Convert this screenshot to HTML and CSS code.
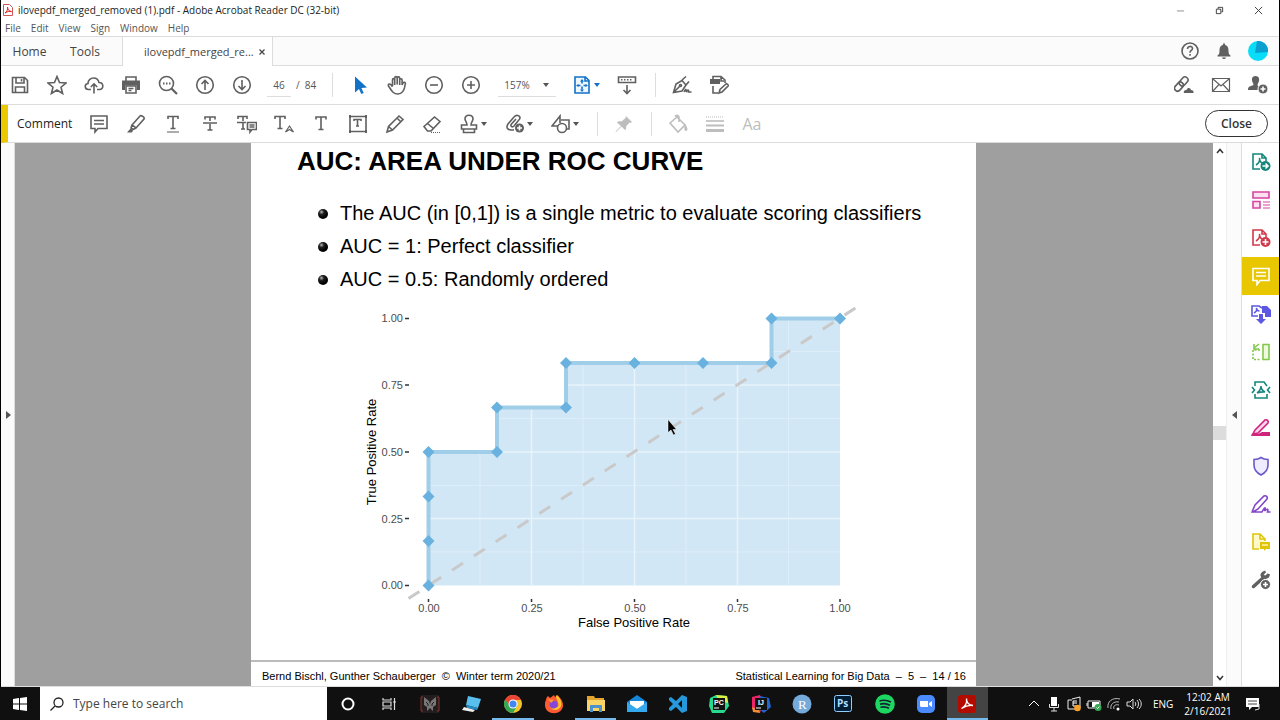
FILE: index.html
```html
<!DOCTYPE html>
<html lang="en">
<head>
<meta charset="utf-8">
<title>ilovepdf_merged_removed (1).pdf - Adobe Acrobat Reader DC (32-bit)</title>
<link rel="stylesheet" href="styles.css">
</head>
<body>
<div class="app">
  <header class="titlebar">
    <svg class="app-icon" viewBox="0 0 10 12"><path d="M.5.5h6l3 3v8h-9z" fill="#fff" stroke="#c55"/><path d="M2 9c2-1 3-4 2.500-6 0 3 2 4.500 4 4.500-2-.5-4 0-6.500 1.500" fill="none" stroke="#d22"/></svg>
    <span class="window-title">ilovepdf_merged_removed (1).pdf - Adobe Acrobat Reader DC (32-bit)</span>
    <div class="window-controls">
      <button aria-label="Minimize"><svg viewBox="0 0 10 10"><path d="M1 5.500h8" stroke="#888"/></svg></button>
      <button aria-label="Restore"><svg viewBox="0 0 10 10"><path d="M1.500 3.500h5v5h-5zM3.500 3V1.500h5v5H7" fill="none" stroke="#333"/></svg></button>
      <button aria-label="Close window"><svg viewBox="0 0 10 10"><path d="M1 1l8 8M9 1L1 9" stroke="#333"/></svg></button>
    </div>
  </header>
  <nav class="menubar" aria-label="Menu">
    <button>File</button><button>Edit</button><button>View</button><button>Sign</button><button>Window</button><button>Help</button>
  </nav>
  <div class="tabbar">
    <button class="tab home">Home</button>
    <button class="tab tools">Tools</button>
    <div class="tab document"><span>ilovepdf_merged_re...</span><button class="tab-close" aria-label="Close tab"><svg viewBox="0 0 8 8"><path d="M1.500 1.500l5 5M6.500 1.500l-5 5" stroke="#444" stroke-width="1.200"/></svg></button></div>
    <div class="actions">
      <button class="tool" aria-label="Help"><svg viewBox="0 0 20 20"><circle cx="10" cy="10" r="8"/><path d="M7.500 8c0-3.500 5-3.200 5-.5 0 2-2.500 2-2.500 4.200M10 13v1.800" stroke-width="1.600"/></svg></button>
      <button class="tool" aria-label="Notifications"><svg viewBox="0 0 20 20"><path class="fill" d="M9 2.500h2V4c3 .8 3.500 3 3.500 6 0 2.500.5 3.500 2 4.500v1h-13v-1c1.500-1 2-2 2-4.500 0-3 .5-5.200 3.500-6zM8 16.500h4c-.5 2-3.500 2-4 0z"/></svg></button>
      <button class="tool" aria-label="Account"><svg viewBox="0 0 20 20"><circle cx="10" cy="10" r="10" fill="#08dcf8" stroke="none"/><path d="M9 0a10 10 0 0 1 11 11L7 12z" fill="#0b9fd0" stroke="none"/></svg></button>
    </div>
  </div>

  <div class="toolbar main-tools">
    <div class="group">
      <button class="tool" aria-label="Save"><svg viewBox="0 0 20 20"><path d="M2.500 2.500h12l3 3v12h-15zM6 3v5h8V3M5.500 17v-5h9v5M11.500 4v2.500"/></svg></button>
      <button class="tool" aria-label="Star"><svg viewBox="0 0 20 20"><path d="M10 1.500l2.500 6 6.500.5-5 4.200 1.600 6.300L10 15l-5.600 3.500L6 12.200 1 8l6.500-.5z"/></svg></button>
      <button class="tool" aria-label="Upload"><svg viewBox="0 0 20 20"><path d="M7 14.500H4.500C.500 14.500 0 9 4 8.500 4 5 7 3 9.500 3c3 0 5 2 5.500 4.500 5 0 5 7 .5 7H13M10 18.500V9M6.800 12L10 8.800l3.200 3.200"/></svg></button>
      <button class="tool" aria-label="Print"><svg viewBox="0 0 20 20"><path d="M5 6V2h10v4"/><path class="fill" d="M1 5.500h18V15h-3v-4.500H4V15H1z"/><path d="M5 11h10v7H5zM7.500 13.500h5M7.500 15.500h3"/></svg></button>
      <button class="tool" aria-label="Find"><svg viewBox="0 0 20 20"><circle cx="8.500" cy="8.500" r="7"/><path d="M13.500 13.500L19 19" stroke-width="2.200"/><path d="M5 8.500h1.500M8 8.500h1.500M11 8.500h1.500" stroke-width="1.800"/></svg></button>
      <button class="tool" aria-label="Previous page"><svg viewBox="0 0 20 20"><circle cx="10" cy="10" r="8.300"/><path d="M10 15V5.500M6.500 9L10 5.500 13.500 9"/></svg></button>
      <button class="tool" aria-label="Next page"><svg viewBox="0 0 20 20"><circle cx="10" cy="10" r="8.300"/><path d="M10 5v9.500M6.500 11l3.500 3.500 3.500-3.500"/></svg></button>
    </div>
    <div class="pager"><input aria-label="Page number" value="46"><span>/&nbsp; 84</span></div>
    <div class="group ruled selection">
      <button class="tool" aria-label="Select"><svg viewBox="0 0 20 20"><path d="M5 1.500v16l4-3.500 2.300 5 2.400-1-2.300-5 5.600-.4z" fill="#1272c8" stroke="none"/></svg></button>
      <button class="tool" aria-label="Hand"><svg viewBox="0 0 20 20"><path d="M5.500 11V5c0-1.800 2-1.800 2.200 0V10 3c.2-1.800 2.500-1.800 2.500 0v6.500V3c.3-1.600 2.400-1.500 2.500 0v7-5.200c.3-1.500 2.400-1.300 2.400.2V10l.8-1.800c1-1.700 2.800-1 2.400.8-.6 5-3 10-7.500 10C6 19 4.500 15.500 1.500 11c-.8-2 1.300-2.700 2.500-1.200l1.500 2"/></svg></button>
      <button class="tool" aria-label="Zoom out"><svg viewBox="0 0 20 20"><circle cx="10" cy="10" r="8.300"/><path d="M6 10h8"/></svg></button>
      <button class="tool" aria-label="Zoom in"><svg viewBox="0 0 20 20"><circle cx="10" cy="10" r="8.300"/><path d="M6 10h8M10 6v8"/></svg></button>
    </div>
    <button class="zoom-level">157%<i class="caret"></i></button>
    <div class="group fit">
      <button class="tool drop blue" aria-label="Fit page"><svg viewBox="0 0 20 20"><path d="M3 2h10.500L17 5.500V18H3z" fill="#eef7fe"/><path d="M13 2v4h4M10 5.500v3M10 11.500v3M5.500 10.500h3M11.500 10.500h3"/><path d="M10 4l2 2.500H8zM10 17l2-2.500H8zM4 10.500L6.500 9v3zM16 10.500L13.500 9v3z" fill="#1272c8" stroke="none"/></svg><i class="caret"></i></button>
      <button class="tool" aria-label="Scrolling"><svg viewBox="0 0 20 20"><path d="M1.500 2h17v5.500h-17zM10 10v8M6.500 15l3.500 3.500 3.500-3.500"/><path d="M4 4.800h12" stroke-dasharray="1.500 1.500"/></svg></button>
    </div>
    <div class="group ruled sign">
      <button class="tool" aria-label="Sign"><svg viewBox="0 0 20 20"><path d="M1.500 17.500L4 9l6-3.500 4 4.500-4 6zM2 17l6-6M10 5l4-3.500M14 10l3-3.500"/><circle cx="8.500" cy="10.500" r="1"/><path d="M12 17c2-4 2.500-3 2 0 2-3 3-2 2.500 0h3"/></svg></button>
      <button class="tool" aria-label="Fill and sign"><svg viewBox="0 0 20 20"><path class="fill" d="M1 4h10v5H1z"/><path d="M4 4V1.500h8L16 5v3M12 2v4h3M4 11v7h5M10 18l1-3.500 6.500-6 2 2-6.500 6.500z"/></svg></button>
    </div>
    <div class="actions">
      <button class="tool" aria-label="Share link"><svg viewBox="0 0 20 20"><g transform="rotate(-48 8 9)"><rect x="-1" y="5.500" width="10" height="6" rx="3"/><rect x="6" y="5.500" width="10" height="6" rx="3"/></g><path class="fill" d="M10 18c-1-3 2-3 2.500-3 1-3 4-2.500 4.500 0 2 0 3 1.500 2.500 3z"/></svg></button>
      <button class="tool" aria-label="Email"><svg viewBox="0 0 20 20"><path d="M1.500 3.500h17v13h-17zM2 4l8 7 8-7M2 16l6-6.500M18 16l-6-6.500" stroke-width="1.200"/></svg></button>
      <button class="tool" aria-label="Add person"><svg viewBox="0 0 20 20"><path class="fill" d="M7.500 1c3.500 0 4 3 3.500 5s-1.500 3-1.500 4c0 1.500 3 1.500 4 2.500V15H0c0-3 1-3.500 4.500-4.500 2-.6.500-2-.2-4C3.500 4 4 1 7.500 1z"/><circle cx="15" cy="14" r="5" fill="#606060" stroke="#fff" stroke-width="1"/><path d="M12.500 14h5M15 11.500v5" stroke="#fff"/></svg></button>
    </div>
  </div>

  <div class="toolbar comment-tools">
    <span class="comment-label">Comment</span>
    <div class="group annotate">
      <button class="tool" aria-label="Sticky note"><svg viewBox="0 0 20 20"><path d="M2 2h16v12.500H9L6 18v-3.500H2zM5 6.500h10M5 10h10"/></svg></button>
      <button class="tool" aria-label="Highlight"><svg viewBox="0 0 20 20"><path d="M6 11l8-9c1-1 5 1 4 3l-8 9zM6 11l-1 3 2 1.500 3-1.500"/><path class="fill" d="M4.500 14.500L1 18.500h5l1-2z"/></svg></button>
      <button class="tool" aria-label="Underline"><svg viewBox="0 0 20 20"><path d="M5 5V2.500h10V5M10 2.500v12M7.500 14.500h5"/><path d="M4 18h12" stroke="#999"/></svg></button>
      <button class="tool" aria-label="Strikethrough"><svg viewBox="0 0 20 20"><path d="M5 5.500V3h10v2.500M10 3v4M10 10v6M7.500 16h5M3 9h14"/></svg></button>
      <button class="tool" aria-label="Replace text"><svg viewBox="0 0 20 20"><path d="M1 5V2.500h9V5M6 2.500V7M6 9v6M4 15h4M0 8.500h9M10.500 8.500h9v7H15l-2 2.500v-2.500h-2.500zM12.500 11h5M12.500 13h5"/></svg></button>
      <button class="tool" aria-label="Insert text"><svg viewBox="0 0 20 20"><path d="M1 5V2.500h10V5M6 2.500v12M3.500 14.500h5"/><path d="M11.500 18l4-6 4 6-4-2.500z" stroke-width="1.200"/></svg></button>
      <button class="tool" aria-label="Add text"><svg viewBox="0 0 20 20"><path d="M5 5.500V3h10v2.500M10 3v12.500M7.500 15.500h5"/></svg></button>
      <button class="tool" aria-label="Text box"><svg viewBox="0 0 20 20"><path d="M2 2.500h16v15H2zM6 7V5.500h7V7M9.500 5.500V12M8 12h3"/><path d="M1 2.500h2M17 2.500h2M1 17.500h2M17 17.500h2" stroke-width="3"/></svg></button>
      <button class="tool" aria-label="Pencil"><svg viewBox="0 0 20 20"><path d="M2 18l1.500-5.500L14 2l4 3.500L7.500 16zM3.500 12.500l4 3.500M12 4l4 4"/></svg></button>
      <button class="tool" aria-label="Eraser"><svg viewBox="0 0 20 20"><path d="M2 12.500L12.500 3l5.500 4.500L9 17H5.500zM5.500 9.500l6 5"/><path d="M9 18.500h10" stroke-dasharray="1 1" stroke-width="1"/></svg></button>
      <button class="tool drop stamp" aria-label="Stamp"><svg viewBox="0 0 20 20"><path d="M8 11c0-3-2-4-2-6 0-5 8-5 8 0 0 2-2 3-2 6h5.500v4h-15v-4zM4.500 15v3.500h11V15"/></svg><i class="caret"></i></button>
      <button class="tool drop" aria-label="Attach"><svg viewBox="0 0 20 20"><path d="M9 16H6c-4 0-5-3-3-6l6-7c2-2.500 6-2 6 1 0 1-1 2-2 3l-4 5c-2 2-4 0-2.500-2L11 5"/><circle class="fill" cx="14.500" cy="14" r="4.500"/><path d="M12 14h5M14.500 11.500v5" stroke="#fff"/></svg><i class="caret"></i></button>
      <button class="tool drop" aria-label="Shapes"><svg viewBox="0 0 20 20"><path d="M7 12H1L9 2v7M10 6h8v9h-3"/><circle cx="11" cy="14" r="4.500"/></svg><i class="caret"></i></button>
    </div>
    <div class="group ruled pin"><button class="tool faint" aria-label="Pin"><svg viewBox="0 0 20 20"><path class="fill" d="M12 2l6 6-1.500 1-1-.5-3.500 4c.5 2 0 3-1 3.500l-3.500-3.500L2 18l-.5-.5L7 12 3 8.500C4 7 6 7 7.500 7.500l4-3.500z"/></svg></button></div>
    <div class="group ruled style">
      <button class="tool faint" aria-label="Fill color"><svg viewBox="0 0 20 20"><path d="M2 9l7-6 8 8-7 7zM7 2.500c2-2 4-1 4 1V8"/><path class="fill" d="M17 10c3 4 3 7 1 7s-2-3-1-7z"/></svg></button>
      <button class="tool faint" aria-label="Line width"><svg viewBox="0 0 20 20"><path d="M1 3h18" stroke-width="1" stroke-dasharray="1 1"/><path d="M1 7h18"/><path d="M1 11.500h18" stroke-width="2"/><path d="M1 16.500h18" stroke-width="3"/></svg></button>
      <button class="tool faint aa">Aa</button>
    </div>
    <button class="close-button">Close</button>
  </div>

  <main class="workspace">
    <button class="left-rail" aria-label="Show navigation"><svg viewBox="0 0 6 8"><path d="M1 0l5 4-5 4z" fill="#555"/></svg></button>
    <div class="viewer">
      <article class="slide">
        <h1>AUC: AREA UNDER ROC CURVE</h1>
        <ul>
          <li>The AUC (in [0,1]) is a single metric to evaluate scoring classifiers</li>
          <li>AUC = 1: Perfect classifier</li>
          <li>AUC = 0.5: Randomly ordered</li>
        </ul>
        <svg class="chart" viewBox="360 300 500 335" role="img" aria-label="ROC curve">
          <path d="M428.500 585.500V452H497V407.500H566V363H771.500V318.500H840V585.500z" fill="#d2e7f5"/>
          <g stroke="#e7f4fc" stroke-width="1">
            <path d="M480 452v133M583 363v222M686 363v222M788.500 319v266M429 552h411M429 485.500h411M497 418.500h343M772 351.500h68" opacity=".6"/>
            <path d="M531.500 408v177M634.500 363v222M737.500 363v222M429 518.500h411M429 452h411M566 385h274" stroke-width="1.500"/>
          </g>
          <path d="M428.500 585.500V452H497V407.500H566V363H771.500V318.500H840" fill="none" stroke="#a0cee8" stroke-width="4"/>
          <path d="M408.500 598.500L857 307" fill="none" stroke="#c9c9c9" stroke-width="3" stroke-dasharray="13 13"/>
          <g fill="#69b1df">
            <path id="pt" d="M428.500 579.500l6 6-6 6-6-6z"/>
            <use href="#pt" y="-44.500"/><use href="#pt" y="-89"/><use href="#pt" y="-133.500"/>
            <use href="#pt" x="68.500" y="-133.500"/><use href="#pt" x="68.500" y="-178"/><use href="#pt" x="137.500" y="-178"/><use href="#pt" x="137.500" y="-222.500"/>
            <use href="#pt" x="206" y="-222.500"/><use href="#pt" x="274.500" y="-222.500"/><use href="#pt" x="343" y="-222.500"/><use href="#pt" x="343" y="-267"/><use href="#pt" x="411.500" y="-267"/>
          </g>
          <path d="M405 318.500h4M405 385h4M405 452h4M405 518.500h4M405 585.500h4M428.500 599v3M531.500 599v3M634.500 599v3M737.500 599v3M840 599v3" stroke="#333" stroke-width="1.500"/>
          <g class="ticks" text-anchor="end"><text x="403" y="322">1.00</text><text x="403" y="389">0.75</text><text x="403" y="456">0.50</text><text x="403" y="523">0.25</text><text x="403" y="589">0.00</text></g>
          <g class="ticks" text-anchor="middle"><text x="429" y="612">0.00</text><text x="532" y="612">0.25</text><text x="635" y="612">0.50</text><text x="738" y="612">0.75</text><text x="840" y="612">1.00</text></g>
          <g class="axis-title" text-anchor="middle"><text x="634" y="627">False Positive Rate</text><text transform="translate(376 452) rotate(-90)">True Positive Rate</text></g>
          <path d="M668 419.500v13l3-2.500 2.500 5 2-1-2.500-4.500h3.500z" fill="#000" stroke="#fff" stroke-width=".5"/>
        </svg>
        <footer><span>Bernd Bischl, Gunther Schauberger &nbsp;© &nbsp;Winter term 2020/21</span><span>Statistical Learning for Big Data &nbsp;– &nbsp;5 &nbsp;– &nbsp;14 / 16</span></footer>
      </article>
    </div>
    <div class="scrollbar"><svg viewBox="0 0 8 6"><path d="M1 5l3-3.500L7 5" fill="none" stroke="#333" stroke-width="1.500"/></svg><div class="thumb"></div><svg viewBox="0 0 8 6"><path d="M1 1l3 3.500L7 1" fill="none" stroke="#333" stroke-width="1.500"/></svg></div>
    <button class="right-rail" aria-label="Hide tools"><svg viewBox="0 0 6 8"><path d="M6 0L1 4l5 4z" fill="#555"/></svg></button>
    <aside class="tool-pane" aria-label="Tools">
      <button class="tool teal" aria-label="Export PDF"><svg viewBox="0 0 20 20"><path d="M9 17H2V2h9l4 4v3M11 2v4h4M5 13c3-2 4-5 3.500-7 0 3 1 4.500 3 5"/><circle class="fill" cx="14.500" cy="14" r="5"/><path d="M11.500 14h5M14.500 11.500l2.500 2.500-2.500 2.500" stroke="#fff"/></svg></button>
      <button class="tool pink" aria-label="Organize pages"><svg viewBox="0 0 20 20"><path d="M2 2h16v6H2zM2 11.500h7v6.500H2z" fill="#fde0f0"/><path d="M12 12h7M12 15h7M12 18h7" stroke-width="1"/></svg></button>
      <button class="tool red" aria-label="Create PDF"><svg viewBox="0 0 20 20"><path d="M9 17H2V2h9l4 4v3M11 2v4h4M5 13c3-2 4-5 3.500-7 0 3 1 4.500 3 5"/><circle class="fill" cx="14.500" cy="14" r="5"/><path d="M11.500 14h6M14.500 11v6" stroke="#fff"/></svg></button>
      <button class="tool active" aria-label="Comment"><svg viewBox="0 0 20 20"><path d="M2 2.500h16v12H9l-3 4v-4H2zM5 6.500h10M5 10h10"/></svg></button>
      <button class="tool indigo" aria-label="Combine files"><svg viewBox="0 0 20 20"><path d="M7 12H1V2h7l3 2M3 9c2-1 3-3 2.500-5 0 2 1 3 3 3"/><path class="fill" d="M11 2h5l4 4v7h-6V9h-3zM8 10h4v5h3l-5 5-5-5h3z"/></svg></button>
      <button class="tool green" aria-label="Rotate pages"><svg viewBox="0 0 20 20"><path d="M12 2.500h6v15h-6z" fill="#edfadf"/><path d="M9 8H2v9.500h8" stroke-dasharray="2 1.500"/><path d="M3 2v5h5M3 6l5-4"/></svg></button>
      <button class="tool teal" aria-label="Compress"><svg viewBox="0 0 20 20"><path d="M4 6V2h9l3 4M4 14v4h12v-4M1 7l2.500 3L1 13M19 7l-2.500 3 2.500 3M6 13c3-2 4-4 4-7 0 3 2 5 4 6-3-.5-5 0-8 1"/></svg></button>
      <button class="tool magenta" aria-label="Redact"><svg viewBox="0 0 20 20"><path d="M4 12L14 2c2-1 4 1 3 3L7 15l-5 1z" fill="#fbd5e9"/><path class="fill" d="M1 15.500l6 .5 4-2h8v4H0z"/></svg></button>
      <button class="tool violet" aria-label="Protect"><svg viewBox="0 0 20 20"><path d="M10 1.500c2 1.500 4 2 7 2V9c0 5-3 8-7 10-4-2-7-5-7-10V3.500c3 0 5-.5 7-2z" fill="#eeedff"/></svg></button>
      <button class="tool purple" aria-label="Fill and sign"><svg viewBox="0 0 20 20"><path d="M1 18l3-7 9-9c2-1 4 1 3 3l-9 10-5 3h9c3-6 4-5 2.500-1 3-3 4-2 3 1h3"/></svg></button>
      <button class="tool yellow" aria-label="Send for comments"><svg viewBox="0 0 20 20"><path d="M8 17H2V2h7l5 5v2M9 2v5h5" fill="#fff9c9"/><path class="fill" d="M9 10h10v7h-4l-2 2v-2H9z"/><path d="M11 13h6" stroke="#fff3a0"/></svg></button>
      <button class="tool" aria-label="More tools"><svg viewBox="0 0 20 20"><path d="M2.500 16.500L12 8" stroke-width="3.500" stroke-linecap="round"/><path d="M17.500 4l-3.500 3-2.500-2.500L14.500 1.500M18 4c0 4-4 5-6.500 3S11 2 14.500 1.500" stroke-width="1.800"/><circle cx="14.500" cy="14.500" r="5" fill="#606060" stroke="#fff" stroke-width="1"/><path d="M12 14.500h5M14.500 12v5" stroke="#fff"/></svg></button>
    </aside>
  </main>
</div>

<div class="taskbar">
  <button class="start" aria-label="Start"><svg viewBox="0 0 14 14"><path d="M0 2l6-1v5.500H0zM7 .900L14 0v6.500H7zM0 7.500h6V13l-6-1zM7 7.500h7V14l-7-.9z" fill="#fff"/></svg></button>
  <label class="search"><svg viewBox="0 0 14 14"><circle cx="8.500" cy="5.500" r="4.500" fill="none" stroke="#222" stroke-width="1.300"/><path d="M5 9L.500 13.500" stroke="#222" stroke-width="1.300"/></svg><input type="text" aria-label="Search" placeholder="Type here to search"></label>
  <div class="pinned">
    <button aria-label="Cortana"><svg viewBox="0 0 20 20"><circle cx="10" cy="10" r="5.500" fill="none" stroke="#fff" stroke-width="2"/></svg></button>
    <button aria-label="Task view"><svg viewBox="0 0 20 20"><path d="M4 4v2h8V4M4 16v-2h8v2M4 8h8v4H4zM15.500 4v12M14 8h3" fill="none" stroke="#ddd" stroke-width="1.200"/></svg></button>
    <button aria-label="Game launcher"><svg viewBox="0 0 20 20"><path d="M1 1h18v18H1z" fill="#241d1d"/><path d="M3 3H1v14h2M17 3h2v14h-2" fill="none" stroke="#833"/><path d="M4 3l5 4 1 3 1-3 5-4v8l-3 2v4l-3-3-3 3v-4l-3-2z" fill="#777"/><path d="M6 8l2 2v2M14 8l-2 2v2" fill="none" stroke="#241d1d"/></svg></button>
    <button aria-label="Remote computer"><svg viewBox="0 0 20 20"><path d="M6 2l13 3-3 9L4 11z" fill="#59bfec"/><path d="M4 11l12 3-1 2-10-2z" fill="#258fc8"/><path d="M2 13l11 3-2 2-11-2z" fill="#eee"/></svg></button>
    <button class="running" aria-label="Chrome"><svg viewBox="0 0 20 20"><circle cx="10" cy="10" r="9" fill="#f4c42f"/><path d="M2.200 5.500A9 9 0 0 1 18 6h-8l-3 6z" fill="#e94435"/><path d="M2.200 5.500A9 9 0 0 0 10 19l4-7H7z" fill="#34a853"/><circle cx="10" cy="10" r="4.500" fill="#fff"/><circle cx="10" cy="10" r="3.500" fill="#4285f4"/></svg></button>
    <button aria-label="Firefox"><svg viewBox="0 0 20 20"><path d="M2 6c0-2 1-3 2-4l2 2 4-3 1 2 3-2c0 2 5 4 5 10 0 11-18 11-18 0 0-2 0-3 1-5z" fill="#ff5a32"/><path d="M12 1c4 2 6 7 5 11-1 4-8 6-11 1l8 0c2-4-2-7-2-12z" fill="#ffc62b"/><circle cx="9.500" cy="10.500" r="4" fill="#8746d7"/><path d="M4 5l6 1-3 3z" fill="#ff9b28"/></svg></button>
    <button class="running" aria-label="File Explorer"><svg viewBox="0 0 20 20"><path d="M1 2h7l1 2h9v13H1z" fill="#e5a52c"/><path d="M1 6h18v11H1z" fill="#fbd467"/><path d="M4 11h12v7h-3v-4H7v4H4z" fill="#4d91ca"/></svg></button>
    <button aria-label="Mail"><svg viewBox="0 0 20 20"><path d="M0 8l10-7 10 7v10H0z" fill="#1686d9"/><path d="M3 7h14v4l-7 4-7-4z" fill="#fff"/><path d="M0 8l10 7 10-7v10H0z" fill="#35a9ed"/></svg></button>
    <button aria-label="VS Code"><svg viewBox="0 0 20 20"><path d="M14 1l5 2v14l-5 2-6-6-5 4-2-1V14l4-4-4-4V4l2-1 5 4zM14 6l-4 4 4 4z" fill="#2698dc" fill-rule="evenodd"/></svg></button>
    <button aria-label="PyCharm"><svg viewBox="0 0 20 20"><path d="M1 4l6-3 11 1 2 10-5 7-12 0-3-7z" fill="#27d98c"/><path d="M7 1l11 1 1 7-9-2z" fill="#d9ef45"/><path d="M4 4h12v12H4z" fill="#111"/><text x="5" y="11" class="logo-text">PC</text><path d="M5 14h5" stroke="#fff"/></svg></button>
    <button aria-label="IntelliJ IDEA"><svg viewBox="0 0 20 20"><path d="M1 3l8-2 3 8-3 10-8-4z" fill="#ed2468"/><path d="M9 2l9 2 2 9-7 6-5-4z" fill="#2565cf"/><path d="M1 13l7 3 1 3-7-1z" fill="#f18b34"/><path d="M4 4h12v12H4z" fill="#111"/><text x="7" y="11" class="logo-text">IJ</text><path d="M5 14h5" stroke="#fff"/></svg></button>
    <button aria-label="RStudio"><svg viewBox="0 0 20 20"><circle cx="10" cy="10" r="9.500" fill="#75aadb"/><text x="6" y="15" class="r-text">R</text></svg></button>
    <button aria-label="Photoshop"><svg viewBox="0 0 20 20"><rect x="1.500" y="1.500" width="17" height="16" rx="2" fill="#001e36" stroke="#8dcfff"/><text x="4" y="13" class="ps-text">Ps</text></svg></button>
    <button aria-label="Spotify"><svg viewBox="0 0 20 20"><circle cx="10" cy="10" r="9.800" fill="#1ed760"/><path d="M4.500 7c4-1.200 8-.7 11.500 1M5 10.300c3-1 7-.6 10 1M5.500 13.300c3-.8 6-.4 8.500 1" fill="none" stroke="#123" stroke-width="1.600"/></svg></button>
    <button aria-label="Zoom"><svg viewBox="0 0 20 20"><rect x="1" y="1" width="18" height="18" rx="5" fill="#4a8cff"/><path d="M4 7h8v6H5l-1-1zM13 9l3-2v6l-3-2z" fill="#fff"/></svg></button>
    <button class="running current" aria-label="Acrobat"><svg viewBox="0 0 20 20"><rect x="1" y="1" width="18" height="18" rx="3" fill="#b30b00"/><path d="M4.500 14.500c4-2 5.500-6 5-10 0 4 2.500 6.500 6.500 7-4-.7-7.500.5-11.500 3z" fill="none" stroke="#fff" stroke-width="1.300"/></svg></button>
  </div>
  <div class="tray">
    <svg viewBox="0 0 16 16"><path d="M3 10l5-5 5 5" fill="none" stroke="#fff"/></svg>
    <svg viewBox="0 0 16 16"><rect x="5" y="1" width="6" height="9" fill="#fff"/><path d="M3.500 8v3.500h9V8M8 12v3M5 15h6" fill="none" stroke="#ddd"/></svg>
    <svg viewBox="0 0 16 16"><path d="M6 4H2v9h8M6 3l8-2v11" fill="none" stroke="#eee"/><path d="M11 5H7v5h4M7 7h4" fill="none" stroke="#fff"/><circle cx="11.500" cy="12" r="3.300" fill="#f6a12a"/></svg>
    <svg viewBox="0 0 16 16"><path d="M2 5h12v7H2zM1 7v3" fill="none" stroke="#eee"/><path d="M6 6h7v5H6z" fill="#fff"/><circle cx="12" cy="11.500" r="3.500" fill="#36a853"/><path d="M10.500 11.500l1 1 2-2" fill="none" stroke="#fff"/></svg>
    <svg viewBox="0 0 16 16"><path d="M2 12C1 6 6 1 14 3M5 13c-1-4 2-8 8-7M8 13c-1-3 1-5 5-4" fill="none" stroke="#bbb"/><circle cx="12" cy="13" r="1.500" fill="#fff"/></svg>
    <svg viewBox="0 0 16 16"><path d="M1 6h3l3-3v10l-3-3H1zM9 6c1 1 1 3 0 4M11 4c2 2 2 6 0 8M13 3c3 3 3 7 0 10" fill="none" stroke="#ddd"/></svg>
    <span class="language">ENG</span>
    <div class="clock"><span>12:02 AM</span><span>2/16/2021</span></div>
    <svg viewBox="0 0 16 16"><path d="M1 2h13v9H7l-3 3v-3H1z" fill="#fff"/><path d="M3 5h9M3 8h9" stroke="#444"/><path d="M14 8v5l-4 1" stroke="#ddd" fill="none"/></svg>
  </div>
</div>
</body>
</html>
```
FILE: styles.css
```css
* { box-sizing: border-box; }
body { margin: 0; min-height: 100vh; display: flex; flex-direction: column; font-family: "Open Sans", "Noto Sans", sans-serif; font-size: 10px; color: #333; background: #fff; }
button { border: 0; padding: 0; margin: 0; background: none; font: inherit; color: inherit; display: flex; align-items: center; justify-content: center; }
input { font: inherit; color: inherit; border: 0; outline: 0; padding: 0; background: none; min-width: 0; }
svg { display: block; flex: none; }
.app { flex: 1; display: flex; flex-direction: column; border: solid #000; border-width: 0 1px; }
.titlebar { height: 20px; display: flex; align-items: center; padding-left: 2px; }
.app-icon { width: 10px; height: 12px; }
.window-title { margin-left: 5px; font-size: 10px; color: #222; }
.window-controls { margin-left: auto; display: flex; gap: 30px; padding-right: 16px; }
.window-controls svg { width: 9px; height: 9px; }
.menubar { height: 16px; display: flex; align-items: center; gap: 10px; padding-left: 4px; font-size: 10px; color: #555; }
.tabbar { height: 30px; display: flex; align-items: stretch; border: solid #dcdcdc; border-width: 1px 0; background: #fbfbfb; }
.tab { font-size: 12px; color: #444; }
.home { padding-left: 11px; width: 46px; }
.tools { margin-left: 22px; width: 32px; }
.document { margin-left: 21px; width: 151px; padding-left: 21px; background: #fff; border: solid #dcdcdc; border-width: 0 1px; display: flex; align-items: center; margin-bottom: -1px; font-size: 11px; }
.tab-close { margin-left: 4px; }
.tab-close svg { width: 8px; height: 8px; }
.actions { margin-left: auto; display: flex; align-items: center; gap: 14px; padding-right: 11px; }
.main-tools .actions { gap: 17px; }
.tool { width: 20px; height: 20px; flex: none; color: #606060; }
.tool svg { width: 20px; height: 20px; fill: none; stroke: currentColor; stroke-width: 1.6px; }
.tool .fill { fill: currentColor; stroke: none; }
.toolbar { height: 39px; display: flex; align-items: center; border-bottom: 1px solid #dcdcdc; }
.group { display: flex; align-items: center; gap: 17px; }
.main-tools { padding-left: 9px; }
.pager { margin-left: 15px; display: flex; align-items: center; gap: 5px; color: #555; }
.pager input { width: 24px; height: 24px; text-align: center; border-bottom: 1px solid #ddd; }
.ruled { border-left: 1px solid #ddd; height: 24px; }
.selection { margin-left: 16px; padding-left: 17px; }
.zoom-level { margin-left: 17px; width: 58px; height: 24px; justify-content: space-between; padding: 0 7px 0 6px; border-bottom: 1px solid #ddd; color: #555; }
.caret { border: solid transparent; border-width: 4px 3px 0; border-top-color: #555; flex: none; }
.fit { margin-left: 15px; gap: 17px; }
.drop { width: 29px; gap: 2px; }
.sign { margin-left: 18px; padding-left: 16px; }
.blue { color: #1272c8; }
.blue .caret { border-top-color: #1272c8; }
.comment-tools { height: 38px; border-left: 7px solid #ebc800; }
.comment-label { width: 57px; margin-left: 9px; font-size: 12px; color: #222; }
.annotate { margin-left: 15px; }
.stamp { margin-left: -1px; }
.pin { margin-left: 18px; padding-left: 16px; }
.style { margin-left: 17px; padding-left: 16px; }
.faint { color: #bdbdbd; }
.aa { font-size: 16px; }
.close-button { margin-left: auto; margin-right: 11px; width: 63px; height: 27px; border: 1px solid #333; border-radius: 14px; font-size: 12px; font-weight: 600; color: #333; }
.workspace { flex: 1; display: flex; border-bottom: 1px solid #ddd; }
.left-rail { width: 14px; background: #fbfbfb; border-right: 1px solid #ddd; }
.left-rail svg, .right-rail svg { width: 6px; height: 8px; }
.viewer { flex: 1; display: flex; justify-content: center; padding-right: 1px; background: #9f9f9f; }
.slide { width: 725px; background: #fff; display: flex; flex-direction: column; font-family: "Liberation Sans", Arial, sans-serif; color: #000; }
.slide h1 { margin: 0 0 18px 46px; font-size: 26px; line-height: 36px; }
.slide ul { margin: 0; padding: 0 0 0 67px; list-style: none; font-size: 20px; line-height: 33px; }
.slide li { display: flex; align-items: center; gap: 12px; white-space: nowrap; }
.slide li::before { content: ""; width: 10px; height: 10px; border-radius: 50%; background: radial-gradient(circle at 35% 30%, #bbb 0, #222 25%, #000 60%); }
.chart { width: 500px; height: 335px; margin: 4px 0 0 109px; }
.ticks { font-size: 11px; fill: #4d4d4d; }
.axis-title { font-size: 13px; fill: #000; }
.slide footer { margin-top: auto; height: 26px; border-top: 2px solid #bbb; padding: 4px 10px 0 11px; display: flex; justify-content: space-between; align-items: center; font-size: 11px; }
.scrollbar { width: 14px; display: flex; flex-direction: column; align-items: center; justify-content: space-between; padding: 5px 0; border-right: 1px solid #eee; }
.scrollbar svg { width: 8px; height: 6px; }
.thumb { width: 13px; height: 14px; margin-top: 36px; background: #dcdcdc; }
.right-rail { width: 15px; background: #fbfbfb; border-right: 1px solid #ddd; }
.tool-pane { width: 37px; display: flex; flex-direction: column; }
.tool-pane .tool { width: 37px; height: 38px; }
.teal { color: #16877d; }
.pink { color: #d544a0; }
.red { color: #d1394a; }
.indigo { color: #5c58e2; }
.green { color: #82c84a; }
.magenta { color: #d0237e; }
.violet { color: #6b58c9; }
.purple { color: #8445c8; }
.yellow { color: #dec50b; }
.active { background: #e8c600; color: #fff; }
.taskbar { height: 33px; display: flex; background: #101010; color: #fff; }
.start { width: 40px; }
.start svg, .search svg { width: 14px; height: 14px; }
.search { width: 287px; background: #fff; display: flex; align-items: center; gap: 9px; padding-left: 10px; }
.search input { flex: 1; height: 30px; font-size: 12px; color: #333; }
.search input::placeholder { color: #444; opacity: 1; }
.pinned { width: 661px; display: flex; }
.pinned button { flex: 1; border: solid transparent; border-width: 2px 0; background-clip: padding-box; }
.pinned svg { width: 20px; height: 20px; }
.pinned .running { border-bottom-color: #76b9ed; }
.pinned .current { background: #444; }
.logo-text { font: bold 7px "Liberation Sans", sans-serif; fill: #fff; }
.r-text { font: 13px "Liberation Serif", serif; fill: #fff; }
.ps-text { font: bold 10px "Open Sans", sans-serif; fill: #b0ddff; }
.tray { margin-left: auto; display: flex; align-items: center; gap: 4px; padding-right: 19px; }
.tray svg { width: 16px; height: 16px; }
.language { margin-left: 7px; width: 22px; }
.clock { margin: 0 8px 0 4px; width: 50px; display: flex; flex-direction: column; align-items: center; line-height: 14px; }
```
